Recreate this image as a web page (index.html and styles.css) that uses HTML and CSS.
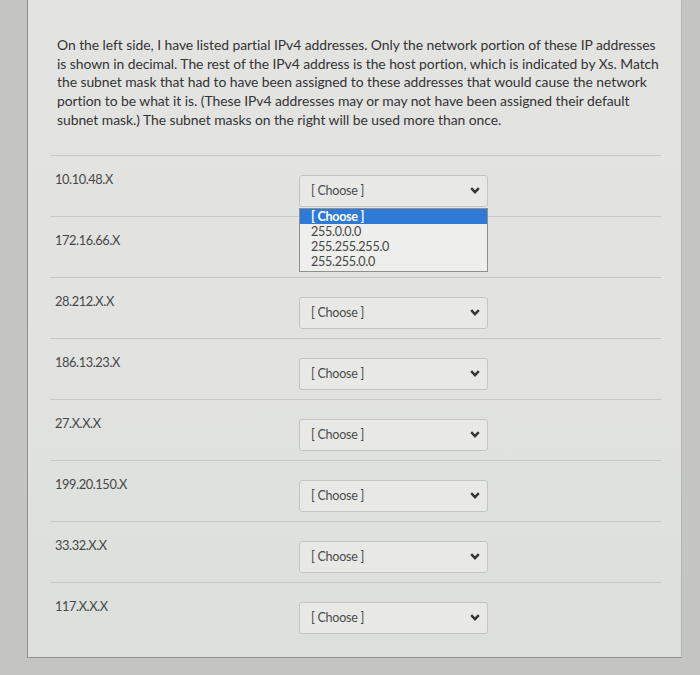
FILE: index.html
```html
<!DOCTYPE html>
<html>
<head>
<meta charset="utf-8">
<link rel="stylesheet" href="styles.css">
</head>
<body>
<div class="screen">
  <div class="panel">
    <p class="question">On the left side, I have listed partial IPv4 addresses. Only the network portion of these IP addresses<br>is shown in decimal. The rest of the IPv4 address is the host portion, which is indicated by Xs. Match<br>the subnet mask that had to have been assigned to these addresses that would cause the network<br>portion to be what it is. (These IPv4 addresses may or may not have been assigned their default<br>subnet mask.) The subnet masks on the right will be used more than once.</p>
    <div class="rows">
      <div class="row">
        <div class="label">10.10.48.X</div>
        <div class="select-wrap">
          <div class="select"><span>[ Choose ]</span><svg class="chev" viewBox="0 0 10 7"><path d="M1.2 1.2 L5 5.2 L8.8 1.2"/></svg></div>
          <ul class="options">
            <li class="active">[ Choose ]</li>
            <li>255.0.0.0</li>
            <li>255.255.255.0</li>
            <li>255.255.0.0</li>
          </ul>
        </div>
      </div>
      <div class="row">
        <div class="label">172.16.66.X</div>
      </div>
      <div class="row">
        <div class="label">28.212.X.X</div>
        <div class="select-wrap"><div class="select"><span>[ Choose ]</span><svg class="chev" viewBox="0 0 10 7"><path d="M1.2 1.2 L5 5.2 L8.8 1.2"/></svg></div></div>
      </div>
      <div class="row">
        <div class="label">186.13.23.X</div>
        <div class="select-wrap"><div class="select"><span>[ Choose ]</span><svg class="chev" viewBox="0 0 10 7"><path d="M1.2 1.2 L5 5.2 L8.8 1.2"/></svg></div></div>
      </div>
      <div class="row">
        <div class="label">27.X.X.X</div>
        <div class="select-wrap"><div class="select"><span>[ Choose ]</span><svg class="chev" viewBox="0 0 10 7"><path d="M1.2 1.2 L5 5.2 L8.8 1.2"/></svg></div></div>
      </div>
      <div class="row">
        <div class="label">199.20.150.X</div>
        <div class="select-wrap"><div class="select"><span>[ Choose ]</span><svg class="chev" viewBox="0 0 10 7"><path d="M1.2 1.2 L5 5.2 L8.8 1.2"/></svg></div></div>
      </div>
      <div class="row">
        <div class="label">33.32.X.X</div>
        <div class="select-wrap"><div class="select"><span>[ Choose ]</span><svg class="chev" viewBox="0 0 10 7"><path d="M1.2 1.2 L5 5.2 L8.8 1.2"/></svg></div></div>
      </div>
      <div class="row last">
        <div class="label">117.X.X.X</div>
        <div class="select-wrap"><div class="select"><span>[ Choose ]</span><svg class="chev" viewBox="0 0 10 7"><path d="M1.2 1.2 L5 5.2 L8.8 1.2"/></svg></div></div>
      </div>
    </div>
  </div>
</div>
</body>
</html>
```
FILE: styles.css
```css
html, body {
  margin: 0;
  padding: 0;
}
body {
  width: 700px;
  height: 675px;
  overflow: hidden;
  background: #c4c5c1;
  font-family: Lato, "Open Sans", sans-serif;
}
.screen {
  padding: 0 18px 0 27px;
}
.panel {
  height: 658px;
  box-sizing: border-box;
  background: linear-gradient(180deg, #e3e3e1 0%, #e2e3e1 50%, #dcdfdc 100%);
  border-left: 1.5px solid #8f918e;
  border-right: 1px solid #b4b6b3;
  border-bottom: 1.5px solid #8f918e;
  padding: 36px 20px 0 22px;
}
.question {
  margin: 0 0 0 7px;
  width: 630px;
  white-space: nowrap;
  font-size: 13.9px;
  line-height: 18.7px;
  color: #333435;
  letter-spacing: -0.05px;
}
.rows {
  margin-top: 25px;
  border-top: 1px solid #cacbc8;
}
.row {
  height: 60px;
  border-bottom: 1px solid #c9cac7;
  display: flex;
  align-items: flex-start;
  position: relative;
}
.row.last {
  border-bottom: none;
}
.label {
  width: 244px;
  padding: 15px 0 0 5px;
  font-size: 12.8px;
  color: #474848;
  letter-spacing: -0.4px;
}
.select-wrap {
  position: relative;
  margin-top: 19px;
}
.select {
  width: 189px;
  height: 32px;
  box-sizing: border-box;
  border: 1px solid #c3c5c2;
  border-radius: 3px;
  background: #e8e9e7;
  display: flex;
  align-items: center;
  justify-content: space-between;
  padding: 0 7px 0 11px;
  font-size: 12.6px;
  color: #4a4b4c;
  letter-spacing: -0.3px;
}
.chev {
  width: 10px;
  height: 7px;
  fill: none;
  stroke: #333435;
  stroke-width: 2.4;
}
.options {
  position: absolute;
  left: 0;
  top: 33px;
  width: 189px;
  box-sizing: border-box;
  margin: 0;
  padding: 0 0 2px 0;
  list-style: none;
  background: #eeeeec;
  border: 1px solid #8e908e;
  font-size: 12.6px;
  line-height: 15px;
  color: #454647;
  letter-spacing: -0.3px;
  z-index: 2;
}
.options li {
  padding: 0 0 0 11px;
}
.options li.active {
  background: #2f7ad6;
  color: #ffffff;
  font-weight: bold;
}
```
